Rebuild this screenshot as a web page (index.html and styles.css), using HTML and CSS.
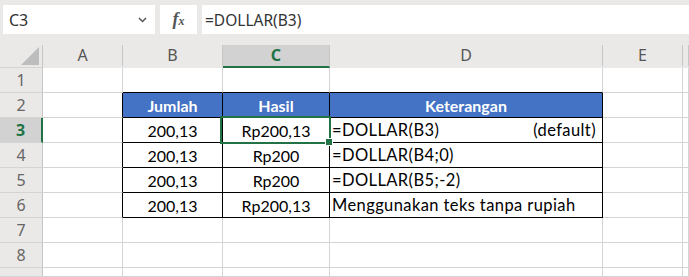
FILE: index.html
```html
<!DOCTYPE html>
<html lang="id">
<head>
<meta charset="UTF-8">
<title>DOLLAR</title>
<link rel="stylesheet" href="styles.css">
</head>
<body>
<div class="formula-bar">
  <div class="name-box">
    <span>C3</span>
    <svg class="chev" width="9" height="6" viewBox="0 0 9 6"><path d="M1 1 L4.5 4.5 L8 1" fill="none" stroke="#555" stroke-width="1.5"/></svg>
  </div>
  <div class="fx-box"><i class="fx">f<small>x</small></i></div>
  <div class="formula">=DOLLAR(B3)</div>
</div>

<div class="sheet">
  <div class="row head">
    <div class="cell corner"><svg width="20" height="20" viewBox="0 0 20 20"><polygon points="19,1 19,19 1,19" fill="#bdbdbd"/></svg></div>
    <div class="cell ch">A</div>
    <div class="cell ch">B</div>
    <div class="cell ch active">C</div>
    <div class="cell ch">D</div>
    <div class="cell ch">E</div>
    <div class="cell ch"></div>
  </div>
  <div class="row">
    <div class="cell rh">1</div>
    <div class="cell"></div>
    <div class="cell tt"></div>
    <div class="cell tt"></div>
    <div class="cell tt"></div>
    <div class="cell"></div>
    <div class="cell"></div>
  </div>
  <div class="row">
    <div class="cell rh">2</div>
    <div class="cell tl"></div>
    <div class="cell tb th">Jumlah</div>
    <div class="cell tb th">Hasil</div>
    <div class="cell tb th">Keterangan</div>
    <div class="cell"></div>
    <div class="cell"></div>
  </div>
  <div class="row">
    <div class="cell rh active">3</div>
    <div class="cell tl"></div>
    <div class="cell tb num">200,13</div>
    <div class="cell tb num selected">Rp200,13</div>
    <div class="cell tb note"><span>=DOLLAR(B3)</span><span>(default)</span></div>
    <div class="cell"></div>
    <div class="cell"></div>
  </div>
  <div class="row">
    <div class="cell rh">4</div>
    <div class="cell tl"></div>
    <div class="cell tb num">200,13</div>
    <div class="cell tb num">Rp200</div>
    <div class="cell tb note"><span>=DOLLAR(B4;0)</span></div>
    <div class="cell"></div>
    <div class="cell"></div>
  </div>
  <div class="row">
    <div class="cell rh">5</div>
    <div class="cell tl"></div>
    <div class="cell tb num">200,13</div>
    <div class="cell tb num">Rp200</div>
    <div class="cell tb note"><span>=DOLLAR(B5;-2)</span></div>
    <div class="cell"></div>
    <div class="cell"></div>
  </div>
  <div class="row">
    <div class="cell rh">6</div>
    <div class="cell tl"></div>
    <div class="cell tb num">200,13</div>
    <div class="cell tb num">Rp200,13</div>
    <div class="cell tb note"><span>Menggunakan teks tanpa rupiah</span></div>
    <div class="cell"></div>
    <div class="cell"></div>
  </div>
  <div class="row">
    <div class="cell rh">7</div>
    <div class="cell"></div><div class="cell"></div><div class="cell"></div><div class="cell"></div><div class="cell"></div><div class="cell"></div>
  </div>
  <div class="row">
    <div class="cell rh">8</div>
    <div class="cell"></div><div class="cell"></div><div class="cell"></div><div class="cell"></div><div class="cell"></div><div class="cell"></div>
  </div>
  <div class="row last">
    <div class="cell rh"></div>
    <div class="cell"></div><div class="cell"></div><div class="cell"></div><div class="cell"></div><div class="cell"></div><div class="cell"></div>
  </div>
</div>
</body>
</html>
```

FILE: styles.css
```css
* { box-sizing: border-box; }
html, body { height: 100%; }
body { margin: 0; background: #ebe9e7; overflow: hidden; font-family: "Noto Sans", "Open Sans", sans-serif; color: #333; }

.formula-bar { display: flex; height: 45px; padding: 5px 0 0 3px; gap: 5px; }
.name-box, .fx-box, .formula { background: #fff; height: 29px; display: flex; align-items: center; }
.name-box { width: 152px; padding: 0 8px 0 6px; justify-content: space-between; font-size: 16px; }
.fx-box { width: 37px; justify-content: center; }
.fx { font-family: "Liberation Serif", serif; font-weight: bold; font-size: 18px; color: #555; }
.fx small { font-size: 12px; }
.formula { flex: 1; padding-left: 3px; font-size: 15.5px; }

.sheet { background: #fff; }
.row { display: grid; grid-template-columns: 43px 80px 100px 107px 273px 80px 6px; height: 25px; }
.row.head { height: 23px; background: #ebe9e7; }
.row.last { height: 9px; }
.cell { border-right: 1px solid #d4d4d4; border-bottom: 1px solid #d4d4d4; font-family: Lato, "Liberation Sans", sans-serif; font-size: 16px; color: #000; display: flex; align-items: flex-end; padding-bottom: 2px; line-height: 19px; white-space: nowrap; overflow: visible; }

.corner { border-right-color: #c6c6c6; display: flex; justify-content: flex-end; align-items: flex-end; padding: 0 2px 1px 0; }
.ch { justify-content: center; align-items: center; padding: 0; font-family: "Noto Sans", sans-serif; font-size: 16px; color: #555; border-right-color: #c6c6c6; border-bottom: 3px solid #ebe9e7; }
.ch.active { background: #d2d2d2; color: #217346; font-weight: bold; border-bottom-color: #217346; border-bottom-width: 2px; }

.rh { background: #ebe9e7; justify-content: center; align-items: center; padding: 0; font-family: "Noto Sans", sans-serif; font-size: 16px; color: #666; border-right-color: #c6c6c6; border-bottom-color: #d4d4d4; }
.rh.active { background: #d2d2d2; color: #217346; font-weight: bold; border-right: 2px solid #217346; }

.tt { border-bottom-color: #000; }
.tl { border-right-color: #000; }
.tb { border-right-color: #000; border-bottom-color: #000; }
.th { background: #4472c4; color: #fff; font-weight: bold; justify-content: center; }
.num { justify-content: center; }
.note { justify-content: space-between; padding-left: 2px; padding-right: 6px; font-size: 16.5px; letter-spacing: 0.4px; }

.selected { position: relative; }
.selected::after { content: ""; position: absolute; top: -2px; left: -3px; right: -2px; bottom: -2px; border: 2px solid #217346; }
.selected::before { content: ""; position: absolute; right: -4px; bottom: -4px; width: 6px; height: 6px; background: #217346; border: 1px solid #fff; z-index: 1; }
```
